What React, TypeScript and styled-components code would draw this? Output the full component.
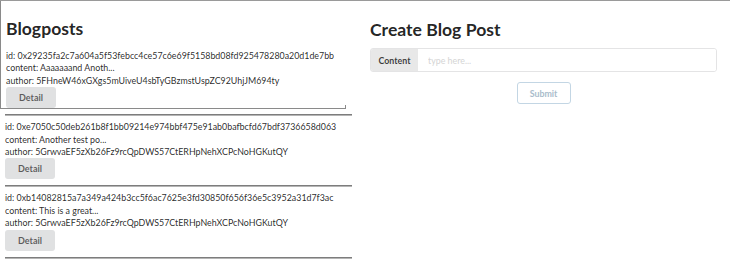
import React from "react";
import styled, { createGlobalStyle } from "styled-components";

const GlobalStyle = createGlobalStyle`
  html, body { margin: 0; padding: 0; background: #ffffff; }
  body { font-family: Lato, "Open Sans", sans-serif; color: rgba(0,0,0,0.87); }
  * { box-sizing: border-box; }
`;

const Page = styled.div`
  width: 730px;
  height: 266px;
  border-top: 1px solid #9a9a9a;
  display: grid;
  grid-template-columns: 352px 347px;
  column-gap: 18px;
  align-items: start;
  overflow: hidden;
`;

const Column = styled.section`
  display: flex;
  flex-direction: column;
`;

const FirstBlock = styled.div`
  position: relative;
  width: 346px;
  border-left: 1px solid #8a8a8a;
  border-bottom: 1px solid #8a8a8a;
  padding-left: 5px;
  &::after {
    content: "";
    position: absolute;
    right: 0;
    bottom: 0;
    width: 1px;
    height: 3px;
    background: #8a8a8a;
  }
`;

const Heading = styled.h2<{ $top: number; $bottom: number }>`
  margin: ${(p) => p.$top}px 0 ${(p) => p.$bottom}px 0;
  font-size: 17.6px;
  line-height: 19px;
  font-weight: 700;
  color: rgba(0, 0, 0, 0.87);
`;

const Post = styled.div<{ $first?: boolean }>`
  display: flex;
  flex-direction: column;
  align-items: flex-start;
  padding: ${(p) => (p.$first ? "0" : "5px 0 0 5px")};
`;

const Line = styled.div`
  font-size: 8.85px;
  line-height: 12.4px;
  color: rgba(0, 0, 0, 0.85);
  white-space: nowrap;
`;

const DetailButton = styled.button`
  margin-top: 0;
  width: 50px;
  height: 21px;
  border: none;
  border-radius: 3px;
  background: #e0e1e2;
  color: rgba(0, 0, 0, 0.6);
  font-family: Lato, sans-serif;
  font-weight: 700;
  font-size: 9px;
  padding: 0;
  cursor: pointer;
`;

const Rule = styled.hr<{ $top: number }>`
  margin: ${(p) => p.$top}px 0 0 5px;
  width: 347px;
  height: 2px;
  border: none;
  border-top: 1px solid #7d7d7d;
  border-bottom: 1px solid #b5b5b5;
`;

const InputGroup = styled.div`
  display: flex;
  height: 24px;
  width: 347px;
  border: 1px solid rgba(34, 36, 38, 0.12);
  border-radius: 3px;
  overflow: hidden;
`;

const InputLabel = styled.label`
  display: flex;
  align-items: center;
  justify-content: center;
  width: 47px;
  background: #e8e8e8;
  font-size: 8.85px;
  font-weight: 700;
  color: rgba(0, 0, 0, 0.75);
`;

const TextInput = styled.input`
  flex: 1;
  min-width: 0;
  border: none;
  outline: none;
  padding: 0 10px;
  font-family: Lato, sans-serif;
  font-size: 8.85px;
  color: rgba(0, 0, 0, 0.87);
  &::placeholder { color: #d4d4d4; }
`;

const SubmitRow = styled.div`
  display: flex;
  justify-content: center;
  margin-top: 10px;
`;

const SubmitButton = styled.button`
  width: 54px;
  height: 22px;
  border: 1px solid #c3d6e4;
  border-radius: 3px;
  background: #ffffff;
  color: #a9bccb;
  font-family: Lato, sans-serif;
  font-size: 8.85px;
  font-weight: 700;
  padding: 0;
`;

type PostData = { id: string; content: string; author: string };

const posts: PostData[] = [
  {
    id: "0x29235fa2c7a604a5f53febcc4ce57c6e69f5158bd08fd925478280a20d1de7bb",
    content: "Aaaaaaand Anoth...",
    author: "5FHneW46xGXgs5mUiveU4sbTyGBzmstUspZC92UhjJM694ty",
  },
  {
    id: "0xe7050c50deb261b8f1bb09214e974bbf475e91ab0bafbcfd67bdf3736658d063",
    content: "Another test po...",
    author: "5GrwvaEF5zXb26Fz9rcQpDWS57CtERHpNehXCPcNoHGKutQY",
  },
  {
    id: "0xb14082815a7a349a424b3cc5f6ac7625e3fd30850f656f36e5c3952a31d7f3ac",
    content: "This is a great...",
    author: "5GrwvaEF5zXb26Fz9rcQpDWS57CtERHpNehXCPcNoHGKutQY",
  },
];

const PostItem: React.FC<{ post: PostData; first?: boolean }> = ({ post, first }) => (
  <Post $first={first}>
    <Line>id: {post.id}</Line>
    <Line>content: {post.content}</Line>
    <Line>author: {post.author}</Line>
    <DetailButton>Detail</DetailButton>
  </Post>
);

export default function App() {
  return (
    <>
      <GlobalStyle />
      <Page>
        <Column>
          <FirstBlock>
            <Heading $top={18} $bottom={12}>Blogposts</Heading>
            <PostItem post={posts[0]} first />
          </FirstBlock>
          <Rule $top={5} />
          <PostItem post={posts[1]} />
          <Rule $top={6} />
          <PostItem post={posts[2]} />
          <Rule $top={6} />
        </Column>
        <Column>
          <Heading $top={19} $bottom={9}>Create Blog Post</Heading>
          <InputGroup>
            <InputLabel>Content</InputLabel>
            <TextInput placeholder="type here..." />
          </InputGroup>
          <SubmitRow>
            <SubmitButton disabled>Submit</SubmitButton>
          </SubmitRow>
        </Column>
      </Page>
    </>
  );
}
